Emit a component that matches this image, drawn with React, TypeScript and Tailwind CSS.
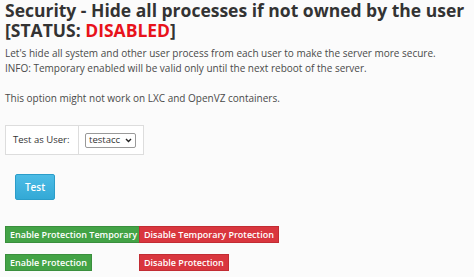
import { useState } from "react";

const users = ["testacc"];

const btnGreen =
  "block h-[17px] px-[4px] bg-[#43a346] border border-[#3a8f3d] text-white text-[9px] font-semibold leading-none whitespace-nowrap";
const btnRed =
  "block h-[17px] px-[4px] bg-[#d9363e] border border-[#c22c33] text-white text-[9px] font-semibold leading-none whitespace-nowrap";

const App = () => {
  const [user] = useState<string>(users[0]);

  return (
    <div className="w-[474px] h-[277px] overflow-hidden bg-[#fbfbfb] pl-[5px] pt-0 text-[#333] font-['Open_Sans',sans-serif]">
      <h1 className="text-[17.5px] leading-[20px] font-bold text-[#333] whitespace-nowrap">
        Security - Hide all processes if not owned by the user
        <br />
        [STATUS: <span className="text-[#e8121b]">DISABLED</span>]
      </h1>

      <p className="mt-[6px] text-[10px] leading-[15px] text-[#4a4a4a]">
        Let's hide all system and other user process from each user to make the server more secure.
        <br />
        INFO: Temporary enabled will be valid only until the next reboot of the server.
        <br />
        <br />
        This option might not work on LXC and OpenVZ containers.
      </p>

      <div className="mt-[19px] flex w-[139px] h-[30px] border border-[#ddd] bg-white">
        <div className="w-[73px] flex items-center pl-[7px] text-[9.5px] text-[#333] border-r border-[#ddd]">
          Test as User:
        </div>
        <div className="flex items-center pl-[6px]">
          <div className="flex items-center justify-between w-[51px] h-[15px] border border-[#999] rounded-[2px] bg-white px-[3px] text-[9.5px] text-[#333]">
            <span>{user}</span>
            <svg width="7" height="5" viewBox="0 0 7 5" className="ml-[1px]">
              <path d="M1 1 L3.5 3.5 L6 1" fill="none" stroke="#222" strokeWidth="1.4" />
            </svg>
          </div>
        </div>
      </div>

      <button className="block mt-[19px] ml-[10px] w-[40px] h-[26px] rounded-[2px] bg-gradient-to-b from-[#4cbce6] to-[#33a9d6] border border-[#2b9dc9] text-white text-[10px] font-semibold">
        Test
      </button>

      <div className="mt-[26px] grid grid-cols-[134px_auto] gap-y-[11px] w-fit">
        <div className="flex">
          <button className={btnGreen}>Enable Protection Temporary</button>
        </div>
        <div className="flex">
          <button className={btnRed}>Disable Temporary Protection</button>
        </div>
        <div className="flex">
          <button className={btnGreen}>Enable Protection</button>
        </div>
        <div className="flex">
          <button className={btnRed}>Disable Protection</button>
        </div>
      </div>
    </div>
  );
};

export default App;
